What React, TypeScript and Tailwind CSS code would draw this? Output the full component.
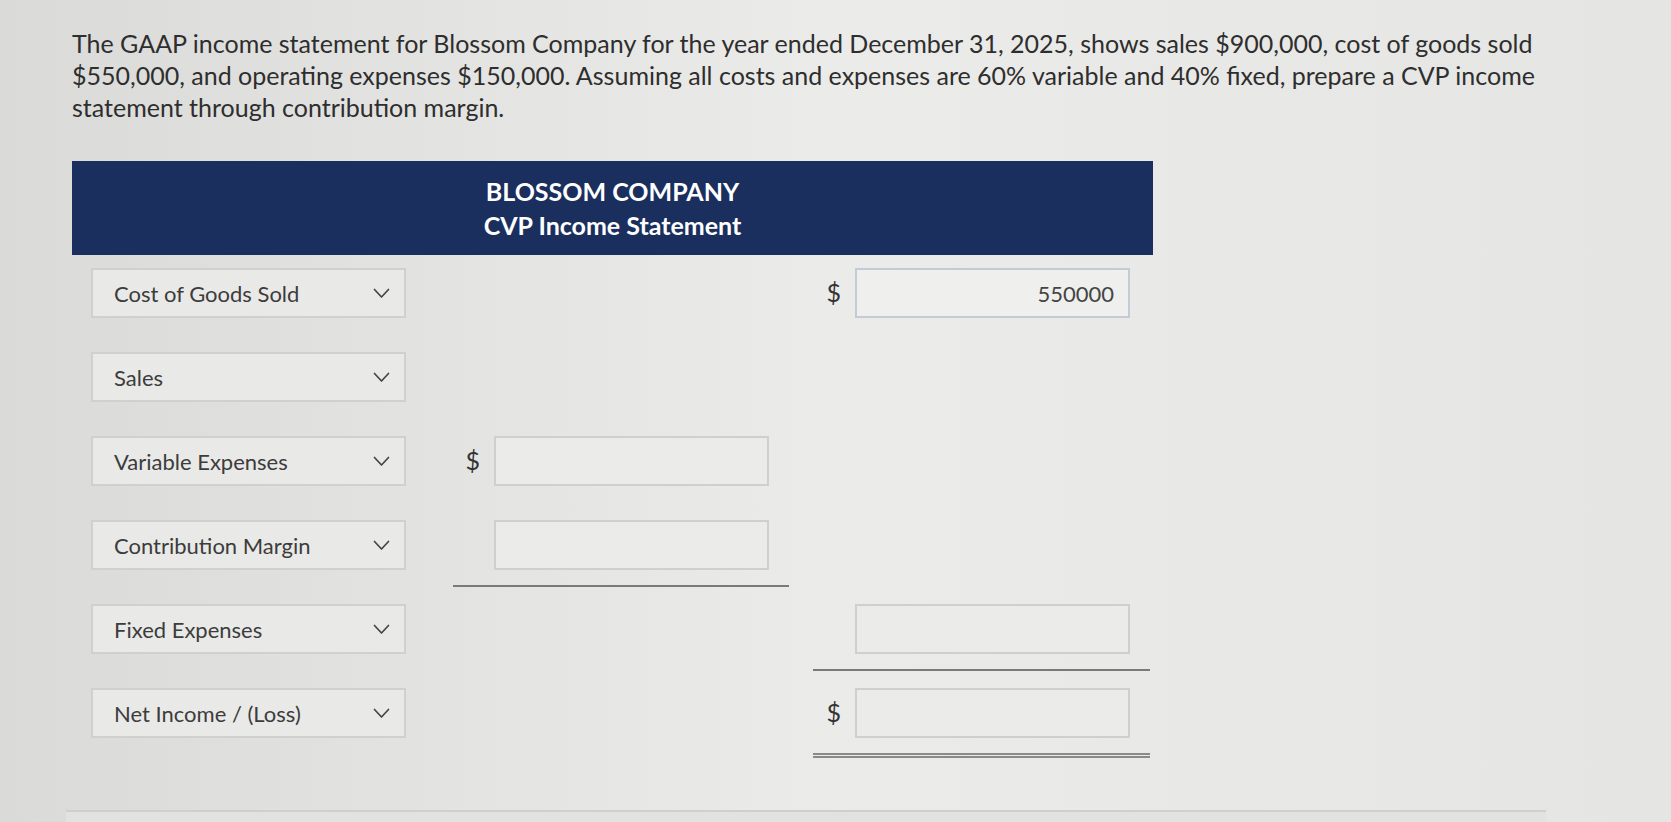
import React from "react";

type Row = {
  label: string;
  col?: 2 | 3;
  dollar?: boolean;
  value?: string;
  focus?: boolean;
  line?: "single" | "double";
};

const rows: Row[] = [
  { label: "Cost of Goods Sold", col: 3, dollar: true, value: "550000", focus: true },
  { label: "Sales" },
  { label: "Variable Expenses", col: 2, dollar: true },
  { label: "Contribution Margin", col: 2, line: "single" },
  { label: "Fixed Expenses", col: 3, line: "single" },
  { label: "Net Income / (Loss)", col: 3, dollar: true, line: "double" },
];

function Chevron() {
  return (
    <svg width="17" height="11" viewBox="0 0 17 11" fill="none">
      <path d="M1.5 1.5 L8.5 9 L15.5 1.5" stroke="#454545" strokeWidth="1.7" strokeLinecap="round" strokeLinejoin="round" />
    </svg>
  );
}

function ValueCell({ row, width }: { row: Row; width: string }) {
  return (
    <div className={`flex flex-col ${width}`}>
      <div className="flex h-[50px] items-center justify-end pr-[20px]">
        {row.dollar && <span className="text-[25px] text-[#333]">$</span>}
        <div
          className={`ml-[14px] flex h-[50px] w-[275px] items-center justify-end border-2 pr-[14px] text-[22px] text-[#444] ${
            row.focus ? "border-[#c2ccd6] bg-[#efefee]" : "border-[#cfcfcd] bg-[#ebebea]"
          }`}
        >
          {row.value}
        </div>
      </div>
      {row.line === "single" && <div className="mt-[15px] border-t-2 border-[#7a7a7a]" />}
      {row.line === "double" && <div className="mt-[15px] border-t-[5px] border-double border-[#8a8a8a]" />}
    </div>
  );
}

export default function App() {
  return (
    <div className="relative h-[822px] w-full overflow-hidden bg-linear-to-r from-[#dadad8] via-[#ebebe9] to-[#e5e5e3] font-['Lato','Open_Sans',sans-serif] text-[#333]">
      <div className="pl-[72px] pt-[27px]">
        <p className="text-[25px] leading-[32px] text-[#2e2e2e]">
          <span className="block whitespace-nowrap">
            The GAAP income statement for Blossom Company for the year ended December 31, 2025, shows sales $900,000, cost of goods sold
          </span>
          <span className="block whitespace-nowrap">
            $550,000, and operating expenses $150,000. Assuming all costs and expenses are 60% variable and 40% fixed, prepare a CVP income
          </span>
          <span className="block whitespace-nowrap">statement through contribution margin.</span>
        </p>

        <div className="mt-[38px] w-[1081px]">
          <div className="flex h-[94px] flex-col items-center justify-center bg-[#1b2f5e] text-[25px] font-bold leading-[34px] text-white">
            <div>BLOSSOM COMPANY</div>
            <div>CVP Income Statement</div>
          </div>

          <div className="flex flex-col pl-[19px] pt-[13px]">
            {rows.map((row) => (
              <div key={row.label} className="flex h-[84px] items-start">
                <div className="flex h-[50px] w-[315px] items-center justify-between border-2 border-[#d0d0ce] bg-[#e9e9e8] pl-[21px] pr-[14px] text-[22px] text-[#3c3c3c]">
                  <span>{row.label}</span>
                  <Chevron />
                </div>
                {row.col === 2 ? (
                  <div className="ml-[47px]">
                    <ValueCell row={row} width="w-[336px]" />
                  </div>
                ) : (
                  <div className="ml-[47px] w-[336px]" />
                )}
                {row.col === 3 && (
                  <div className="ml-[24px]">
                    <ValueCell row={row} width="w-[337px]" />
                  </div>
                )}
              </div>
            ))}
          </div>
        </div>
      </div>

      <div className="mx-[66px] mt-[38px] h-[20px] w-[1480px] border-t-2 border-[#cfcfcd] bg-[#e2e2e0]" />
    </div>
  );
}
